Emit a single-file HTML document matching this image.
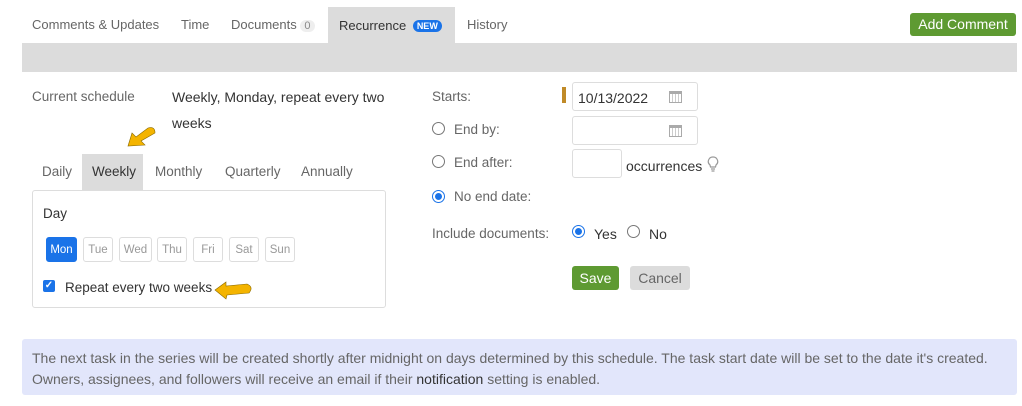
<!DOCTYPE html><html><head><style>
body{margin:0;width:1022px;height:406px;background:#fff;font-family:"Liberation Sans",sans-serif;font-size:13.5px;color:#666;position:relative;overflow:hidden}
.a{position:absolute;white-space:nowrap}
.dk{color:#333}
.t{font-size:13px}
.day{position:absolute;top:237px;height:25px;border:1px solid #ddd;border-radius:3px;font-size:11.5px;color:#999;text-align:center;line-height:24px;box-sizing:border-box}
.inp{position:absolute;border:1px solid #ddd;border-radius:3px;box-sizing:border-box;background:#fff}
.rad{position:absolute;width:13px;height:13px;border:1px solid #777;border-radius:50%;box-sizing:border-box}
.rad.on{border:1px solid #1a73e8;background:radial-gradient(circle,#1a73e8 0 3.2px,#fff 3.7px)}
.cal{position:absolute;width:13px;height:12px;border:1px solid #aaa;border-top:3px solid #aaa;box-sizing:border-box;background:repeating-linear-gradient(90deg,#fff 0 2px,#ccc 2px 3px)}
</style></head><body>
<div class="a t" style="left:32px;top:17px">Comments &amp; Updates</div>
<div class="a t" style="left:181px;top:17px">Time</div>
<div class="a t" style="left:231px;top:17px">Documents <span style="display:inline-block;background:#eee;border-radius:8px;font-size:11px;padding:0 4px;color:#888">0</span></div>
<div class="a" style="left:328px;top:7px;width:127px;height:36px;background:#dcdcdc"></div>
<div class="a dk t" style="left:339px;top:18px">Recurrence <span style="background:#1a73e8;color:#fff;font-size:9px;font-weight:bold;border-radius:7px;padding:1px 4px;margin-left:3px;vertical-align:1px">NEW</span></div>
<div class="a t" style="left:467px;top:17px">History</div>
<div class="a" style="left:910px;top:13px;width:106px;height:23px;background:#5e9a32;border-radius:3px;color:#fff;font-size:14px;line-height:23px;text-align:center">Add Comment</div>
<div class="a" style="left:22px;top:43px;width:995px;height:29px;background:#dcdcdc"></div>
<div class="a" style="left:32px;top:89px">Current schedule</div>
<div class="a dk" style="left:172px;top:89px;font-size:14px">Weekly, Monday, repeat every two</div>
<div class="a dk" style="left:172px;top:115px;font-size:14px">weeks</div>
<svg class="a" style="left:124px;top:124px" width="36" height="26" viewBox="0 0 36 26"><path d="M4 22 L8 9 L12 13 L24 4 Q31 2 31 9 L17 17 L21 21 Z" fill="#f4b400" stroke="#8a6a00" stroke-width=".6"/></svg>
<div class="a" style="left:42px;top:164px">Daily</div>
<div class="a" style="left:82px;top:154px;width:61px;height:36px;background:#dcdcdc"></div>
<div class="a dk" style="left:92px;top:164px">Weekly</div>
<div class="a" style="left:155px;top:164px">Monthly</div>
<div class="a" style="left:225px;top:164px">Quarterly</div>
<div class="a" style="left:301px;top:164px">Annually</div>
<div class="a" style="left:32px;top:190px;width:354px;height:118px;border:1px solid #ddd;border-radius:3px;box-sizing:border-box"></div>
<div class="a dk" style="left:43px;top:206px">Day</div>
<div class="day" style="left:46px;width:31px;background:#1a73e8;border-color:#1a73e8;color:#fff">Mon</div>
<div class="day" style="left:83px;width:30px">Tue</div>
<div class="day" style="left:119px;width:33px">Wed</div>
<div class="day" style="left:157px;width:30px">Thu</div>
<div class="day" style="left:193px;width:30px">Fri</div>
<div class="day" style="left:229px;width:30px">Sat</div>
<div class="day" style="left:265px;width:30px">Sun</div>
<div class="a" style="left:43px;top:280px;width:12px;height:12px;background:#1a73e8;border-radius:2px;color:#fff;font-size:10px;line-height:12px;text-align:center;font-weight:bold">✓</div>
<div class="a dk" style="left:65px;top:280px;font-size:13.5px">Repeat every two weeks</div>
<svg class="a" style="left:213px;top:278px" width="42" height="24" viewBox="0 0 42 24"><path d="M2 12 L13 4 L13 8 L34 6 Q41 9 36 15 L14 17 L13 21 Z" fill="#f4b400" stroke="#8a6a00" stroke-width=".6"/></svg>
<div class="a" style="left:432px;top:89px">Starts:</div>
<div class="a" style="left:562px;top:87px;width:4px;height:16px;background:#c08a28"></div>
<div class="inp" style="left:572px;top:82px;width:126px;height:29px"></div>
<div class="a dk" style="left:578px;top:90px;font-size:14px">10/13/2022</div>
<div class="cal" style="left:669px;top:91px"></div>
<div class="rad" style="left:432px;top:122px"></div><div class="a" style="left:454px;top:122px">End by:</div>
<div class="inp" style="left:572px;top:116px;width:126px;height:29px"></div>
<div class="cal" style="left:669px;top:125px"></div>
<div class="rad" style="left:432px;top:155px"></div><div class="a" style="left:454px;top:155px">End after:</div>
<div class="inp" style="left:572px;top:149px;width:50px;height:29px"></div>
<div class="a dk" style="left:626px;top:158px;font-size:14px">occurrences</div>
<svg class="a" style="left:707px;top:156px" width="12" height="16" viewBox="0 0 12 16"><path d="M6 1 A4.5 4.5 0 0 1 9 9 L8.5 11 L3.5 11 L3 9 A4.5 4.5 0 0 1 6 1 Z M4 13 H8 M4.5 15 H7.5" fill="none" stroke="#999" stroke-width="1.2"/></svg>
<div class="rad on" style="left:432px;top:190px"></div><div class="a" style="left:454px;top:189px">No end date:</div>
<div class="a" style="left:432px;top:226px">Include documents:</div>
<div class="rad on" style="left:572px;top:225px"></div><div class="a dk" style="left:594px;top:226px;font-size:14px">Yes</div>
<div class="rad" style="left:627px;top:225px"></div><div class="a dk" style="left:649px;top:226px;font-size:14px">No</div>
<div class="a" style="left:572px;top:266px;width:47px;height:24px;background:#5e9a32;border-radius:3px;color:#fff;line-height:24px;text-align:center;font-size:14px">Save</div>
<div class="a" style="left:630px;top:266px;width:60px;height:24px;background:#dcdcdc;border-radius:3px;color:#666;line-height:24px;text-align:center;font-size:14px">Cancel</div>
<div class="a" style="left:22px;top:339px;width:995px;height:56px;background:#e2e6fb;border-radius:3px"></div>
<div class="a" style="left:32px;top:348px;font-size:14px;line-height:21px">The next task in the series will be created shortly after midnight on days determined by this schedule. The task start date will be set to the date it's created.<br>Owners, assignees, and followers will receive an email if their <span class="dk">notification</span> setting is enabled.</div>
</body></html>
